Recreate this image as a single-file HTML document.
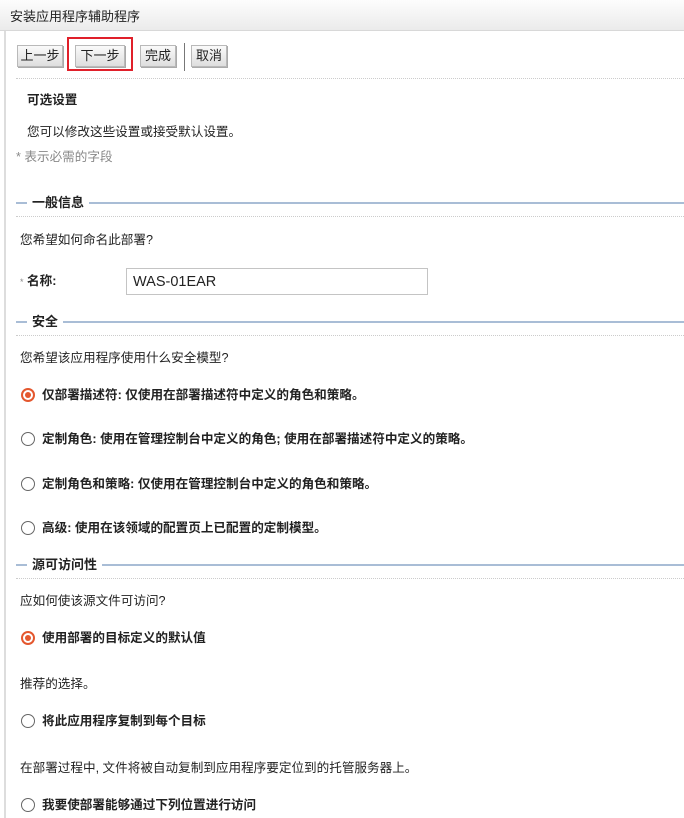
<!DOCTYPE html>
<html><head><meta charset="utf-8"><style>
*{margin:0;padding:0;box-sizing:border-box}
body{width:684px;height:818px;overflow:hidden;background:#fff;font-family:"Liberation Sans","Noto Sans CJK SC",sans-serif;font-size:12.6px;color:#222;position:relative}
.a{position:absolute;white-space:nowrap}
.title{left:0;top:0;width:684px;height:31px;background:linear-gradient(#fdfdfd,#ebebeb);border-bottom:1px solid #d8d8d8}
.lb{left:4px;top:31px;width:2px;height:787px;background:#ddd}
.btn{height:22px;top:45px;border:1px solid #b9b9b9;background:linear-gradient(#fafafa,#dedede);font-size:13px;line-height:20px;text-align:center;box-shadow:1px 1px 0 #aaa}
.dot{left:16px;width:668px;border-top:1px dotted #ccc}
.sec{left:16px;width:668px;height:2px;background:#a9bdd6}
.sl{background:#fff;padding:0 5px;font-weight:bold;font-size:13px;line-height:16px}
.r{width:14px;height:14px;border:1.5px solid #666;border-radius:50%;background:#fff}
.r.on{border:2px solid #e4572e}
.r.on::after{content:"";position:absolute;left:2px;top:2px;width:6px;height:6px;border-radius:50%;background:#e4572e}
.t{left:42px;font-weight:bold;line-height:16px}
b{font-weight:bold}
</style></head><body>
<div class="a title"></div>
<div class="a" style="left:10px;top:6px;font-size:13px">安装应用程序辅助程序</div>
<div class="a lb"></div>
<div class="a btn" style="left:17px;width:46px">上一步</div>
<div class="a btn" style="left:75px;width:50px">下一步</div>
<div class="a" style="left:67px;top:37px;width:66px;height:34px;border:2px solid #e0202a"></div>
<div class="a btn" style="left:140px;width:36px">完成</div>
<div class="a" style="left:184px;top:43px;width:1px;height:28px;background:#777"></div>
<div class="a btn" style="left:191px;width:36px">取消</div>
<div class="a dot" style="top:78px"></div>
<div class="a" style="left:27px;top:89px;font-weight:bold">可选设置</div>
<div class="a" style="left:27px;top:121px">您可以修改这些设置或接受默认设置。</div>
<div class="a" style="left:16px;top:146px;color:#888">* 表示必需的字段</div>

<div class="a sec" style="top:202px"></div>
<div class="a sl" style="left:27px;top:195px">一般信息</div>
<div class="a dot" style="top:216px"></div>
<div class="a" style="left:20px;top:229px">您希望如何命名此部署?</div>
<div class="a" style="left:20px;top:270px"><span style="color:#888;font-size:9px">*</span> <b>名称:</b></div>
<div class="a" style="left:126px;top:268px;width:302px;height:27px;border:1px solid #c4c4c4;font-size:14.5px;line-height:27px;padding-left:6px">WAS-01EAR</div>

<div class="a sec" style="top:321px"></div>
<div class="a sl" style="left:27px;top:314px">安全</div>
<div class="a dot" style="top:335px"></div>
<div class="a" style="left:20px;top:347px">您希望该应用程序使用什么安全模型?</div>
<div class="a r on" style="left:21px;top:388px"></div><div class="a t" style="top:387px">仅部署描述符: 仅使用在部署描述符中定义的角色和策略。</div>
<div class="a r" style="left:21px;top:432px"></div><div class="a t" style="top:431px">定制角色: 使用在管理控制台中定义的角色; 使用在部署描述符中定义的策略。</div>
<div class="a r" style="left:21px;top:477px"></div><div class="a t" style="top:476px">定制角色和策略: 仅使用在管理控制台中定义的角色和策略。</div>
<div class="a r" style="left:21px;top:521px"></div><div class="a t" style="top:520px">高级: 使用在该领域的配置页上已配置的定制模型。</div>

<div class="a sec" style="top:564px"></div>
<div class="a sl" style="left:27px;top:557px">源可访问性</div>
<div class="a dot" style="top:578px"></div>
<div class="a" style="left:20px;top:590px">应如何使该源文件可访问?</div>
<div class="a r on" style="left:21px;top:631px"></div><div class="a t" style="top:630px">使用部署的目标定义的默认值</div>
<div class="a" style="left:20px;top:673px">推荐的选择。</div>
<div class="a r" style="left:21px;top:714px"></div><div class="a t" style="top:713px">将此应用程序复制到每个目标</div>
<div class="a" style="left:20px;top:757px">在部署过程中, 文件将被自动复制到应用程序要定位到的托管服务器上。</div>
<div class="a r" style="left:21px;top:798px"></div><div class="a t" style="top:797px">我要使部署能够通过下列位置进行访问</div>
</body></html>
